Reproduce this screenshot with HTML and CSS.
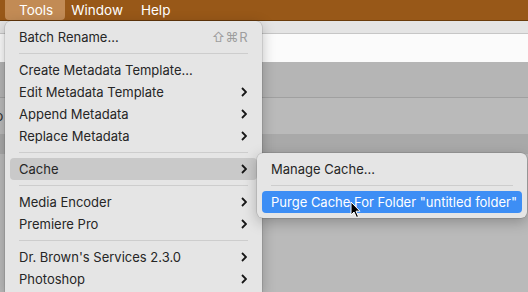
FILE: index.html
```html
<!DOCTYPE html>
<html>
<head>
<meta charset="utf-8">
<link rel="stylesheet" href="styles.css">
</head>
<body>
<div class="menubar">
  <span class="mb-item active">Tools</span>
  <span class="mb-item">Window</span>
  <span class="mb-item">Help</span>
</div>
<div class="window">
  <div class="toolbar"></div>
  <div class="white"></div>
  <div class="row r1"></div>
  <div class="row r2"><span class="peek">o</span></div>
  <div class="row r3"></div>
  <div class="row r4"></div>
</div>

<div class="menu">
  <div class="item"><span>Batch Rename...</span><span class="sc">⇧⌘R</span></div>
  <div class="sep"></div>
  <div class="item"><span>Create Metadata Template...</span></div>
  <div class="item"><span>Edit Metadata Template</span><svg class="chev" viewBox="0 0 6 10"><polyline points="1,1 5,5 1,9"/></svg></div>
  <div class="item"><span>Append Metadata</span><svg class="chev" viewBox="0 0 6 10"><polyline points="1,1 5,5 1,9"/></svg></div>
  <div class="item"><span>Replace Metadata</span><svg class="chev" viewBox="0 0 6 10"><polyline points="1,1 5,5 1,9"/></svg></div>
  <div class="sep"></div>
  <div class="item sel"><span>Cache</span><svg class="chev" viewBox="0 0 6 10"><polyline points="1,1 5,5 1,9"/></svg></div>
  <div class="sep"></div>
  <div class="item"><span>Media Encoder</span><svg class="chev" viewBox="0 0 6 10"><polyline points="1,1 5,5 1,9"/></svg></div>
  <div class="item"><span>Premiere Pro</span><svg class="chev" viewBox="0 0 6 10"><polyline points="1,1 5,5 1,9"/></svg></div>
  <div class="sep"></div>
  <div class="item"><span>Dr. Brown's Services 2.3.0</span><svg class="chev" viewBox="0 0 6 10"><polyline points="1,1 5,5 1,9"/></svg></div>
  <div class="item"><span>Photoshop</span><svg class="chev" viewBox="0 0 6 10"><polyline points="1,1 5,5 1,9"/></svg></div>
</div>

<div class="submenu">
  <div class="item"><span>Manage Cache...</span></div>
  <div class="sep"></div>
  <div class="item hl"><span>Purge Cache For Folder "untitled folder"</span></div>
</div>

<svg class="cursor" viewBox="0 0 12 18" width="12" height="18">
  <path d="M1,1 L1,14 L4,11 L6.5,16.5 L8.5,15.6 L6,10.2 L10,10.2 Z" fill="#000" stroke="#fff" stroke-width="1" stroke-linejoin="round"/>
</svg>
</body>
</html>
```

FILE: styles.css
```css
html, body {
  margin: 0;
  padding: 0;
}
body {
  width: 528px;
  height: 292px;
  overflow: hidden;
  position: relative;
  background: #b9b9b9;
  font-family: Inter, "Liberation Sans", Arial, sans-serif;
  font-size: 13px;
}
.menubar {
  height: 20px;
  background: #985818;
  border-bottom: 1px solid #6a3c0c;
  display: flex;
  align-items: stretch;
  padding-left: 5px;
  font-size: 13.5px;
}
.mb-item {
  color: #fff;
  padding: 0 9px;
  display: flex;
  align-items: center;
  line-height: 20px;
}
.mb-item.active {
  background: #c28b55;
  border-radius: 0 0 4px 4px;
  padding: 0 12px 0 14px;
  margin-right: -3px;
}
.window {
  display: flex;
  flex-direction: column;
  height: 271px;
}
.toolbar {
  height: 12px;
  background: #e4e4e4;
  border-bottom: 1px solid #c6c6c6;
}
.white {
  height: 28px;
  background: #fbfbfb;
}
.row {
  overflow: hidden;
}
.r1 { height: 35px; background: #b5b5b5; border-bottom: 1px solid #a0a0a0; }
.r2 { height: 36px; background: #bababa; }
.r3 { height: 20px; background: #a9a9a9; }
.r4 { flex: 1; background: #bababa; }
.peek {
  display: block;
  font-size: 14px;
  color: #333;
  line-height: 36px;
  margin-left: -5px;
}
.menu {
  position: absolute;
  left: 5px;
  top: 21px;
  width: 257px;
  height: 271px;
  overflow: hidden;
  background: #e5e5e5;
  border-radius: 6px 6px 0 0;
  box-shadow: 0 0 0 0.5px rgba(0,0,0,0.18), 0 4px 14px rgba(0,0,0,0.25);
  padding-top: 5px;
  box-sizing: border-box;
}
.item {
  height: 22px;
  display: flex;
  align-items: center;
  justify-content: space-between;
  padding: 0 9px;
  margin: 0 5px;
  border-radius: 4px;
  color: #262626;
  white-space: nowrap;
}
.item.sel {
  background: #c9c9c9;
}
.sc {
  color: #9d9d9d;
  letter-spacing: 0.5px;
}
.chev {
  width: 6px;
  height: 10px;
  fill: none;
  stroke: #161616;
  stroke-width: 1.8;
  margin-right: 1px;
}
.sep {
  height: 1px;
  background: #cdcdcd;
  margin: 5px 14px;
}
.submenu {
  position: absolute;
  left: 257px;
  top: 153px;
  width: 270px;
  height: 65px;
  background: #e5e5e5;
  border-radius: 6px;
  box-shadow: 0 0 0 0.5px rgba(0,0,0,0.18), 0 4px 14px rgba(0,0,0,0.25);
  padding-top: 5px;
  box-sizing: border-box;
}
.item.hl {
  background: #3d8ef5;
  color: #fff;
}
.cursor {
  position: absolute;
  left: 350px;
  top: 201px;
}
```
